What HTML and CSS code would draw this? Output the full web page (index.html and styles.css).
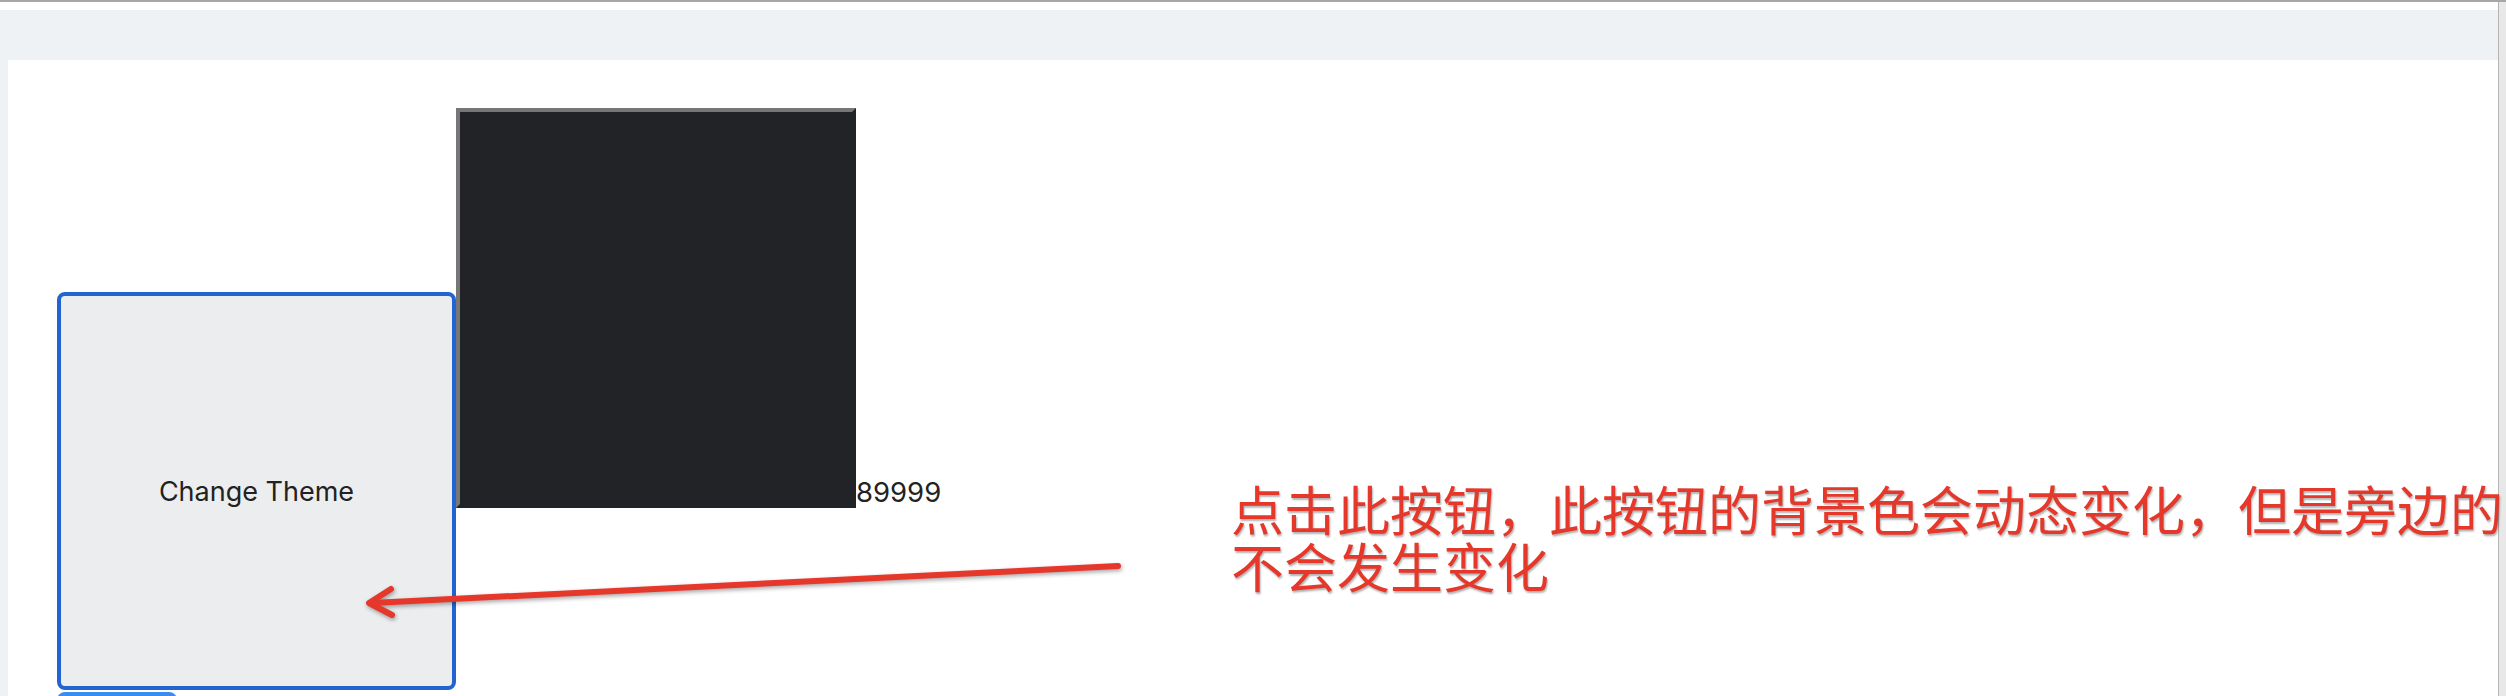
FILE: index.html
```html
<!DOCTYPE html>
<html lang="zh">
<head>
<meta charset="utf-8">
<title>Change Theme</title>
<link rel="stylesheet" href="styles.css">
</head>
<body>
<div class="topline"></div>
<div class="window">
  <div class="viewport">
    <div class="band"></div>
    <div class="main">
      <div class="panel">
        <div class="row">
          <button class="theme-btn">Change Theme</button>
          <div class="swatch"></div>
          <span class="value">89999</span>
        </div>
        <div class="blue-btn"></div>
      </div>
    </div>
  </div>
  <div class="edge"></div>
</div>
<div class="note">点击此按钮，此按钮的背景色会动态变化，但是旁边的<br>不会发生变化</div>
<svg class="arrow" width="2506" height="696" viewBox="0 0 2506 696">
  <g fill="none" stroke="#e5382b" stroke-width="6" stroke-linecap="round" stroke-linejoin="round">
    <line x1="1118" y1="566" x2="372" y2="603"/>
    <polyline points="391,589 369,603 392,615"/>
  </g>
</svg>
</body>
</html>
```
FILE: styles.css
```css
html, body {
  margin: 0;
  height: 696px;
  overflow: hidden;
  background: #ffffff;
}
.topline {
  height: 2px;
  background: #a6a6a6;
}
.window {
  display: flex;
  height: 694px;
  overflow: hidden;
}
.viewport {
  width: 2498px;
  flex-shrink: 0;
  padding-top: 8px;
  box-sizing: border-box;
  background: #ffffff;
  display: flex;
  flex-direction: column;
  overflow: hidden;
}
.band {
  flex-shrink: 0;
  height: 50px;
  background: #eff2f5;
}
.main {
  flex: 1 1 auto;
  min-height: 0;
  background: #eff2f5;
  padding-left: 8px;
  display: flex;
  overflow: hidden;
}
.panel {
  flex: 1;
  background: #ffffff;
  padding: 48px 0 0 49px;
}
.row {
  display: flex;
  align-items: flex-start;
}
.theme-btn {
  box-sizing: border-box;
  width: 399px;
  height: 398px;
  margin: 184px 0 0 0;
  padding: 0;
  border: 4px solid #2264d1;
  border-radius: 8px;
  background: #ecedef;
  color: #222222;
  font: 27px "Inter", "Roboto", sans-serif;
}
.swatch {
  box-sizing: border-box;
  width: 400px;
  height: 400px;
  border: 4px solid;
  border-color: #767676 #222326 #222326 #767676;
  background: #222326;
}
.value {
  margin-top: 367px;
  color: #222222;
  font: 27.5px/34px "Inter", "Roboto", sans-serif;
}
.blue-btn {
  width: 120px;
  height: 40px;
  margin-top: 2px;
  background: #3b8cf1;
  border-radius: 8px;
}
.edge {
  flex: 1;
  background: #e8e8e8;
  border-left: 1px solid #b4b4b4;
}
.note {
  position: absolute;
  left: 1231px;
  top: 480px;
  white-space: nowrap;
  color: #e5382b;
  font: 53px/57px "Noto Sans CJK SC", sans-serif;
  text-shadow: 1px 2px 2px rgba(0, 0, 0, 0.3);
}
.arrow {
  position: absolute;
  left: 0;
  top: 0;
  pointer-events: none;
  filter: drop-shadow(1px 2px 2px rgba(0, 0, 0, 0.35));
}
```
